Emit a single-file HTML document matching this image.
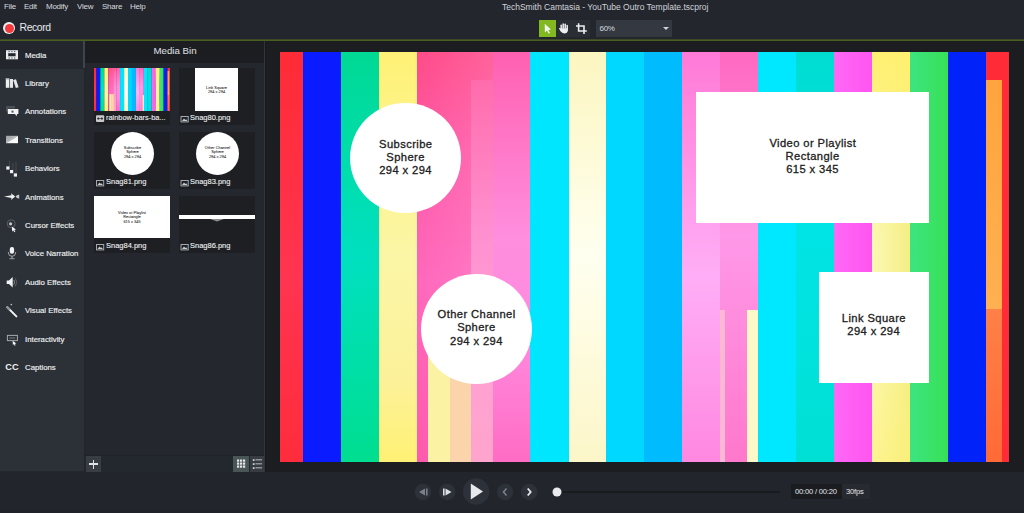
<!DOCTYPE html>
<html><head><meta charset="utf-8">
<style>
*{margin:0;padding:0;box-sizing:border-box}
html,body{width:1024px;height:513px;overflow:hidden;background:#23262d;font-family:"Liberation Sans",sans-serif;color:#d8dbe0}
.a{position:absolute}
.t{position:absolute;white-space:nowrap;line-height:1}
.ph{width:160px;text-align:center;font-size:11.2px;letter-spacing:0.4px;text-indent:0.4px;line-height:13.3px;color:#202020;-webkit-text-stroke:0.3px #202020}
</style></head><body>
<!-- top bar -->
<div class="a" style="left:0;top:0;width:1024px;height:40px;background:#23262d"></div>
<div class="t" style="left:4px;top:3px;font-size:8px;letter-spacing:-0.25px;color:#d8dade">File</div>
<div class="t" style="left:24px;top:3px;font-size:8px;letter-spacing:-0.25px;color:#d8dade">Edit</div>
<div class="t" style="left:46px;top:3px;font-size:8px;letter-spacing:-0.25px;color:#d8dade">Modify</div>
<div class="t" style="left:77px;top:3px;font-size:8px;letter-spacing:-0.25px;color:#d8dade">View</div>
<div class="t" style="left:102px;top:3px;font-size:8px;letter-spacing:-0.25px;color:#d8dade">Share</div>
<div class="t" style="left:130px;top:3px;font-size:8px;letter-spacing:-0.25px;color:#d8dade">Help</div>
<div class="t" style="left:502px;top:3px;font-size:8.5px;color:#d0d3d8">TechSmith Camtasia - YouTube Outro Template.tscproj</div>
<div class="a" style="left:3px;top:22px;width:12px;height:12px;border-radius:50%;background:#f0f0f0"></div>
<div class="a" style="left:4.5px;top:23.5px;width:9px;height:9px;border-radius:50%;background:#f23a3f"></div>
<div class="t" style="left:19.6px;top:23.3px;font-size:10.4px;letter-spacing:-0.4px;color:#e8eaee">Record</div>
<!-- toolbar -->
<div class="a" style="left:539px;top:20px;width:51px;height:17px;background:#292d34"></div>
<div class="a" style="left:539px;top:20px;width:17px;height:17px;background:#82b820"></div>
<svg class="a" style="left:536px;top:17px" width="56" height="23" viewBox="536 17 56 23">
  <path d="M544.7 23.8 L551 29.6 L548.4 29.9 L550 33 L548.6 33.6 L547 30.5 L544.9 32.4 Z" fill="#f4f6f0"/>
  <g stroke="#eceef0" stroke-linecap="round" fill="none"><path d="M561.2 29 V25.2" stroke-width="1.5"/><path d="M563.2 28 V23.9" stroke-width="1.5"/><path d="M565.2 28 V24.2" stroke-width="1.5"/><path d="M567.2 29 V25.6" stroke-width="1.5"/><path d="M559.8 28.6 L561.4 31" stroke-width="1.5"/></g><path d="M560.5 28.2 H567.9 V30.5 Q567.5 33.4 564.2 33.4 Q561.8 33.4 560.6 31 Z" fill="#eceef0"/>
  <path d="M578.6 23.3 V31 H586.8 M576 26 H584 V34" fill="none" stroke="#eceef0" stroke-width="1.6"/>
</svg>
<div class="a" style="left:596px;top:20px;width:76px;height:17px;background:#333841"></div>
<div class="t" style="left:599.6px;top:25px;font-size:8px;letter-spacing:-0.4px;color:#d8dade">60%</div>
<div class="a" style="left:663px;top:27px;width:0;height:0;border-left:3px solid transparent;border-right:3px solid transparent;border-top:3px solid #d0d3d8"></div>
<!-- green line -->
<div class="a" style="left:0;top:39px;width:1024px;height:1px;background:#3a4826"></div><div class="a" style="left:0;top:40px;width:1024px;height:1px;background:#4a5e22"></div>

<!-- sidebar -->
<div class="a" style="left:0;top:41px;width:84px;height:430px;background:#2c3137"></div>
<div class="a" style="left:0;top:41px;width:84px;height:28px;background:#23272d"></div>
<div class="a" style="left:84px;top:41px;width:1px;height:430px;background:#22262b"></div><div class="a" style="left:83px;top:41px;width:2px;height:27px;background:#3e444b"></div>

<div class="t" style="left:25px;top:51.5px;font-size:7.8px;color:#eef0f2;-webkit-text-stroke:0.15px #eef0f2">Media</div>
<div class="t" style="left:25px;top:79.9px;font-size:7.8px;color:#eef0f2;-webkit-text-stroke:0.15px #eef0f2">Library</div>
<div class="t" style="left:25px;top:108.3px;font-size:7.8px;color:#eef0f2;-webkit-text-stroke:0.15px #eef0f2">Annotations</div>
<div class="t" style="left:25px;top:136.7px;font-size:7.8px;color:#eef0f2;-webkit-text-stroke:0.15px #eef0f2">Transitions</div>
<div class="t" style="left:25px;top:165.1px;font-size:7.8px;color:#eef0f2;-webkit-text-stroke:0.15px #eef0f2">Behaviors</div>
<div class="t" style="left:25px;top:193.5px;font-size:7.8px;color:#eef0f2;-webkit-text-stroke:0.15px #eef0f2">Animations</div>
<div class="t" style="left:25px;top:221.9px;font-size:7.8px;color:#eef0f2;-webkit-text-stroke:0.15px #eef0f2">Cursor Effects</div>
<div class="t" style="left:25px;top:250.3px;font-size:7.8px;color:#eef0f2;-webkit-text-stroke:0.15px #eef0f2">Voice Narration</div>
<div class="t" style="left:25px;top:278.7px;font-size:7.8px;color:#eef0f2;-webkit-text-stroke:0.15px #eef0f2">Audio Effects</div>
<div class="t" style="left:25px;top:307.1px;font-size:7.8px;color:#eef0f2;-webkit-text-stroke:0.15px #eef0f2">Visual Effects</div>
<div class="t" style="left:25px;top:335.5px;font-size:7.8px;color:#eef0f2;-webkit-text-stroke:0.15px #eef0f2">Interactivity</div>
<div class="t" style="left:25px;top:363.9px;font-size:7.8px;color:#eef0f2;-webkit-text-stroke:0.15px #eef0f2">Captions</div>
<svg class="a" style="left:0;top:41px" width="24" height="340" viewBox="0 41 24 340">
  <!-- media -->
  <rect x="6" y="50.2" width="12" height="9.1" fill="#e8eaec"/>
  <rect x="8.2" y="53.2" width="7.4" height="3.1" fill="#23272d"/>
  <rect x="8.6" y="50.9" width="1" height="1.2" fill="#3a3e44"/><rect x="11.4" y="50.9" width="1" height="1.2" fill="#3a3e44"/><rect x="14.2" y="50.9" width="1" height="1.2" fill="#3a3e44"/>
  <rect x="8.6" y="57.4" width="1" height="1.2" fill="#3a3e44"/><rect x="11.4" y="57.4" width="1" height="1.2" fill="#3a3e44"/><rect x="14.2" y="57.4" width="1" height="1.2" fill="#3a3e44"/>
  <!-- library -->
  <rect x="5.8" y="78" width="3.4" height="9.8" fill="#eceef0"/>
  <rect x="9.8" y="79" width="3.2" height="8.8" fill="#e4e6e8"/>
  <path d="M13.2 80 L16 79.2 L18.6 87.2 L15.8 88 Z" fill="#e4e6e8"/><rect x="5.8" y="78" width="3.4" height="1.4" fill="#9a9ea4"/>
  <!-- annotations -->
  <path d="M6 106 H15 V108.5 H8 V111.5 H6 Z" fill="#4a5058"/>
  <path d="M7.8 109 H18.4 V114 H17 L16.6 116.2 L15 114 H7.8 Z" fill="#f2f3f5"/>
  <rect x="11.5" y="110.6" width="2" height="2" fill="#55585e"/>
  <!-- transitions -->
  <defs><linearGradient id="tg" x1="0" y1="0" x2="1" y2="1"><stop offset="0" stop-color="#9c9ea2"/><stop offset="0.5" stop-color="#b8babd"/><stop offset="0.55" stop-color="#f4f5f6"/><stop offset="1" stop-color="#ffffff"/></linearGradient></defs>
  <rect x="6" y="135.8" width="12" height="7.4" fill="url(#tg)"/>
  <!-- behaviors -->
  <rect x="9" y="161" width="0.8" height="6" fill="#4c5058"/><rect x="12.5" y="163" width="0.8" height="7" fill="#4c5058"/><rect x="15.6" y="162" width="0.8" height="11" fill="#4c5058"/>
  <rect x="6.3" y="166.4" width="3.2" height="3.2" fill="#f0f1f3"/>
  <rect x="10" y="170" width="3.2" height="3.2" fill="#f0f1f3"/>
  <rect x="13.8" y="173.4" width="3.2" height="3.2" fill="#f0f1f3"/>
  <!-- animations -->
  <path d="M4 196.6 L11.5 195.2 L11 193.3 L15.2 196.6 L11 199.9 L11.5 198 Z" fill="#f0f1f3"/>
  <path d="M15.6 196.6 Q17 194.4 19.2 194.8 V198.4 Q17 198.8 15.6 196.6 Z" fill="#c8cacd"/>
  <!-- cursor effects -->
  <circle cx="11.2" cy="223.8" r="4" fill="none" stroke="#5a5e66" stroke-width="1"/>
  <circle cx="10.6" cy="223.8" r="1.6" fill="#c4c8d2"/>
  <path d="M11.8 226.6 L16 229.6 L14.3 229.9 L15.4 231.8 L14.4 232.3 L13.3 230.4 L12.2 231.4 Z" fill="#f2f3f5"/>
  <!-- voice narration -->
  <rect x="9.8" y="247" width="4.3" height="6.8" rx="2" fill="#f2f3f5"/>
  <path d="M8.3 252 Q8.5 256 12 256.2 Q15.5 256 15.7 252" fill="none" stroke="#9a9ea4" stroke-width="1.1"/>
  <rect x="11.4" y="256" width="1.2" height="2.6" fill="#9a9ea4"/>
  <rect x="9.5" y="258.2" width="5" height="1" fill="#9a9ea4"/>
  <!-- audio effects -->
  <path d="M6.7 280.5 H9 L12.7 277 V287.6 L9 284 H6.7 Z" fill="#f2f3f5"/>
  <path d="M13.8 280 Q15.3 282.3 13.8 284.6" fill="none" stroke="#8a8e96" stroke-width="1"/>
  <path d="M15.3 278.3 Q18.2 282.3 15.3 286.3" fill="none" stroke="#5a5e66" stroke-width="1"/>
  <!-- visual effects -->
  <path d="M7.3 307.3 L16.4 316.4" stroke="#f0f1f3" stroke-width="2" stroke-linecap="round"/>
  <path d="M7.3 307.3 L9.2 309.2" stroke="#8a8e96" stroke-width="2.1" stroke-linecap="round"/>
  <circle cx="11.3" cy="304.6" r="0.8" fill="#c8cacd"/>
  <!-- interactivity -->
  <rect x="7.4" y="335.4" width="10" height="5.2" fill="none" stroke="#a4a8ae" stroke-width="1"/>
  <rect x="9.2" y="337.6" width="6" height="0.8" fill="#8a8e96"/>
  <path d="M12.6 340.8 L16.4 343.4 L14.9 343.7 L15.6 345.3 L14.6 345.7 L14 344.1 L12.9 345 Z" fill="#f4f5f6"/>
</svg>
<div class="t" style="left:5.2px;top:363.2px;font-size:9.2px;font-weight:bold;color:#eceef0;letter-spacing:0.2px">CC</div>
<!-- media bin -->
<div class="a" style="left:85px;top:41px;width:180px;height:431px;background:#24282e"></div>
<div class="a" style="left:85px;top:41px;width:180px;height:21.5px;background:#1b1d21"></div>
<div class="t" style="left:85px;width:180px;text-align:center;top:45.8px;font-size:9.7px;color:#d4d7dc;-webkit-text-stroke:0.12px #d4d7dc">Media Bin</div>
<!-- tiles -->
<div class="a" style="left:94px;top:68px;width:76px;height:57px;background:#1d1f23"></div>
<div class="a" style="left:179px;top:68px;width:76px;height:57px;background:#1d1f23"></div>
<div class="a" style="left:94px;top:132px;width:76px;height:57px;background:#1d1f23"></div>
<div class="a" style="left:179px;top:132px;width:76px;height:57px;background:#1d1f23"></div>
<div class="a" style="left:94px;top:196px;width:76px;height:57px;background:#1d1f23"></div>
<div class="a" style="left:179px;top:196px;width:76px;height:57px;background:#1d1f23"></div>
<!-- thumb 1 rainbow -->
<div class="a" style="left:94px;top:68px;width:76px;height:43px;overflow:hidden"><div class="a" style="left:0;top:0;width:729px;height:411px;transform-origin:0 0;transform:scale(0.10425,0.10462)"><div class="a" style="left:0px;top:0;width:23px;height:411px;background:linear-gradient(#ff2b36,#ff3450 55%,#ff2c3c)"></div>
<div class="a" style="left:23px;top:0;width:38px;height:411px;background:#0a1cff"></div>
<div class="a" style="left:61px;top:0;width:38px;height:411px;background:linear-gradient(#00d994,#00e0c0 50%,#00de90)"></div>
<div class="a" style="left:99px;top:0;width:38px;height:411px;background:linear-gradient(#fff176,#fbf6a6 50%,#fcf19a 80%,#fff174)"></div>
<div class="a" style="left:137px;top:0;width:76px;height:411px;background:linear-gradient(90deg,rgba(255,255,255,0),rgba(255,255,255,0.12)),linear-gradient(170deg,#ff4a88 0%,#ff5aa8 25%,#ff68bc 55%,#ff58ac 100%)"></div>
<div class="a" style="left:213px;top:0;width:37px;height:411px;background:linear-gradient(#ff60b0,#ff8ede 45%,#ff8ade 70%,#ff6cc4)"></div>
<div class="a" style="left:250px;top:0;width:38.5px;height:411px;background:#00e6ff"></div>
<div class="a" style="left:288.5px;top:0;width:37.5px;height:411px;background:linear-gradient(#fcf6c0,#fffff0 50%,#fcf6c8)"></div>
<div class="a" style="left:326px;top:0;width:38px;height:411px;background:#00d8ff"></div>
<div class="a" style="left:364px;top:0;width:38px;height:411px;background:#00bcff"></div>
<div class="a" style="left:402px;top:0;width:38px;height:411px;background:linear-gradient(#ff7ad6,#ffaef6 55%,#ff88e0)"></div>
<div class="a" style="left:440px;top:0;width:38px;height:411px;background:linear-gradient(#ff68c0,#ff98e8 45%,#ff78cc)"></div>
<div class="a" style="left:478px;top:0;width:38px;height:411px;background:#00e8ff"></div>
<div class="a" style="left:516px;top:0;width:38px;height:411px;background:linear-gradient(#00dcd0,#00e4e6 40%,#00e2dc 75%,#00dfd4)"></div>
<div class="a" style="left:554px;top:0;width:38px;height:411px;background:linear-gradient(90deg,#ff68f6,#ff55f0)"></div>
<div class="a" style="left:592px;top:0;width:38px;height:411px;background:linear-gradient(#fff070,rgba(255,240,112,0) 45%),linear-gradient(rgba(255,255,255,0) 70%,rgba(255,240,112,0.5)),linear-gradient(90deg,#fdf8b4,#f4ee84)"></div>
<div class="a" style="left:630px;top:0;width:38px;height:411px;background:linear-gradient(90deg,#3ce480,#38e056)"></div>
<div class="a" style="left:668px;top:0;width:38px;height:411px;background:#0222fa"></div>
<div class="a" style="left:706px;top:0;width:23px;height:411px;background:#ff2b36"></div>
<div class="a" style="left:191px;top:29px;width:22px;height:382px;background:linear-gradient(#ff6cac,#ff90d0 40%,#ffa0d4 70%,#ffa4cc)"></div>
<div class="a" style="left:148px;top:250px;width:22px;height:161px;background:#fcf2a4"></div>
<div class="a" style="left:170px;top:250px;width:21px;height:161px;background:#fcd4ac"></div>
<div class="a" style="left:440px;top:259px;width:5px;height:152px;background:#ffb8d4"></div>
<div class="a" style="left:467px;top:259px;width:11px;height:152px;background:#fdf8c8"></div>
<div class="a" style="left:706px;top:29px;width:16px;height:229px;background:linear-gradient(#ffa43e,#ffb050)"></div>
<div class="a" style="left:706px;top:258px;width:16px;height:153px;background:linear-gradient(#ff8048,#ff6a36)"></div></div></div>
<!-- thumb 2 link square -->
<div class="a" style="left:195px;top:68px;width:43px;height:43px;background:#fff"></div>
<div class="t" style="left:195px;width:43px;text-align:center;top:86px;font-size:3.9px;line-height:4.4px;color:#1a1a1a;-webkit-text-stroke:0.05px #1a1a1a">Link Square<br>294 x 294</div>
<!-- thumb 3 subscribe circle -->
<div class="a" style="left:111px;top:132px;width:43px;height:43px;border-radius:50%;background:#fff"></div>
<div class="t" style="left:111px;width:43px;text-align:center;top:146px;font-size:3.9px;line-height:4.4px;color:#1a1a1a;-webkit-text-stroke:0.05px #1a1a1a">Subscribe<br>Sphere<br>294 x 294</div>
<!-- thumb 4 other channel -->
<div class="a" style="left:196px;top:132px;width:43px;height:43px;border-radius:50%;background:#fff"></div>
<div class="t" style="left:196px;width:43px;text-align:center;top:146px;font-size:3.9px;line-height:4.4px;color:#1a1a1a;-webkit-text-stroke:0.05px #1a1a1a">Other Channel<br>Sphere<br>294 x 294</div>
<!-- thumb 5 rectangle -->
<div class="a" style="left:94px;top:196px;width:76px;height:42px;background:#fff"></div>
<div class="t" style="left:94px;width:76px;text-align:center;top:211px;font-size:3.9px;line-height:4.4px;color:#1a1a1a;-webkit-text-stroke:0.05px #1a1a1a">Video or Playlist<br>Rectangle<br>615 x 345</div>
<!-- thumb 6 strip -->
<div class="a" style="left:179px;top:215px;width:76px;height:4px;background:#fff"></div><svg class="a" style="left:210px;top:219px" width="14" height="3" viewBox="0 0 14 3"><path d="M0 0 H14 L7 2.5 Z" fill="#8a8c90"/></svg>
<!-- labels -->
<div class="t" style="left:106px;top:114px;font-size:7.4px;color:#eceef0;-webkit-text-stroke:0.12px #eceef0">rainbow-bars-ba...</div>
<div class="t" style="left:190px;top:114px;font-size:7.5px;color:#eceef0;-webkit-text-stroke:0.12px #eceef0">Snag80.png</div>
<div class="t" style="left:106px;top:178px;font-size:7.5px;color:#eceef0;-webkit-text-stroke:0.12px #eceef0">Snag81.png</div>
<div class="t" style="left:190px;top:178px;font-size:7.5px;color:#eceef0;-webkit-text-stroke:0.12px #eceef0">Snag83.png</div>
<div class="t" style="left:106px;top:242px;font-size:7.5px;color:#eceef0;-webkit-text-stroke:0.12px #eceef0">Snag84.png</div>
<div class="t" style="left:190px;top:242px;font-size:7.5px;color:#eceef0;-webkit-text-stroke:0.12px #eceef0">Snag86.png</div>
<!-- label icons -->
<svg class="a" style="left:85px;top:100px" width="180" height="160" viewBox="85 100 180 160">
<rect x="96" y="115.2" width="8.2" height="6.8" rx="1" fill="#c8cacc"/><circle cx="98.3" cy="118.6" r="1.1" fill="#2a2c30"/><circle cx="101.9" cy="118.6" r="1.1" fill="#2a2c30"/><rect x="98.3" y="118.3" width="3.6" height="0.6" fill="#2a2c30"/>
<rect x="181.0" y="116.5" width="7.2" height="5.4" fill="none" stroke="#a4a8ac" stroke-width="1"/><path d="M182.0 121 L184.0 118.5 L185.5 120 L186.3 119.3 L187.3 121 Z" fill="#c8ccd0"/>
<rect x="96.5" y="180.5" width="7.2" height="5.4" fill="none" stroke="#a4a8ac" stroke-width="1"/><path d="M97.5 185 L99.5 182.5 L101 184 L101.8 183.3 L102.8 185 Z" fill="#c8ccd0"/>
<rect x="181.0" y="180.5" width="7.2" height="5.4" fill="none" stroke="#a4a8ac" stroke-width="1"/><path d="M182.0 185 L184.0 182.5 L185.5 184 L186.3 183.3 L187.3 185 Z" fill="#c8ccd0"/>
<rect x="96.5" y="244.5" width="7.2" height="5.4" fill="none" stroke="#a4a8ac" stroke-width="1"/><path d="M97.5 249 L99.5 246.5 L101 248 L101.8 247.3 L102.8 249 Z" fill="#c8ccd0"/>
<rect x="181.0" y="244.5" width="7.2" height="5.4" fill="none" stroke="#a4a8ac" stroke-width="1"/><path d="M182.0 249 L184.0 246.5 L185.5 248 L186.3 247.3 L187.3 249 Z" fill="#c8ccd0"/>
</svg>
<!-- bin bottom -->
<div class="a" style="left:85px;top:455px;width:180px;height:1px;background:#1f2328"></div><div class="a" style="left:85px;top:456px;width:180px;height:16px;background:#23282e"></div>
<div class="a" style="left:86px;top:456px;width:15px;height:16px;background:#383d44"></div>
<div class="a" style="left:89px;top:463.4px;width:9px;height:1.2px;background:#e0e2e6"></div>
<div class="a" style="left:92.9px;top:459.5px;width:1.2px;height:9px;background:#e0e2e6"></div>
<div class="a" style="left:250px;top:456px;width:15px;height:16px;background:#363c42"></div><div class="a" style="left:233px;top:456px;width:16px;height:16px;background:#4a5557"></div>
<svg class="a" style="left:233px;top:456px" width="32" height="15" viewBox="233 456 32 15">
<g fill="#e4e8e8"><rect x="237" y="459.5" width="2.2" height="2.2"/><rect x="240" y="459.5" width="2.2" height="2.2"/><rect x="243" y="459.5" width="2.2" height="2.2"/>
<rect x="237" y="462.5" width="2.2" height="2.2"/><rect x="240" y="462.5" width="2.2" height="2.2"/><rect x="243" y="462.5" width="2.2" height="2.2"/>
<rect x="237" y="465.5" width="2.2" height="2.2"/><rect x="240" y="465.5" width="2.2" height="2.2"/><rect x="243" y="465.5" width="2.2" height="2.2"/></g>
<g fill="#c8ccd0"><rect x="252.8" y="459.2" width="1.8" height="1.8"/><rect x="252.8" y="463.2" width="1.8" height="1.8"/><rect x="252.8" y="467.2" width="1.8" height="1.8"/>
<rect x="255.5" y="459.4" width="6.5" height="0.9"/><rect x="255.5" y="463.4" width="6.5" height="0.9"/><rect x="255.5" y="467.4" width="6.5" height="0.9"/></g>
</svg>

<!-- canvas area -->
<div class="a" style="left:264px;top:41px;width:760px;height:431px;background:#1c1d21"></div>
<div class="a" style="left:264px;top:41px;width:1px;height:431px;background:#32363c"></div><div class="a" style="left:265px;top:41px;width:1px;height:431px;background:#18191d"></div>

<!-- bottom bar -->
<div class="a" style="left:0;top:472px;width:1024px;height:41px;background:#22262c"></div><div class="a" style="left:0;top:510px;width:1024px;height:3px;background:#1f2228"></div>
<svg class="a" style="left:0;top:472px" width="1024" height="41" viewBox="0 472 1024 41">
  <circle cx="423" cy="492" r="8.2" fill="#2d3139"/>
  <path d="M419 492 L425 488.5 V495.5 Z" fill="#7c8087"/><rect x="426" y="488.5" width="1.6" height="7" fill="#7c8087"/>
  <circle cx="447.2" cy="492" r="8.2" fill="#2d3139"/>
  <rect x="443" y="488.5" width="1.6" height="7" fill="#dde0e4"/><path d="M445.5 488.5 L451.5 492 L445.5 495.5 Z" fill="#dde0e4"/>
  <circle cx="476.1" cy="491.5" r="13.2" fill="#2d3139"/>
  <path d="M470.8 483.5 L483 491.5 L470.8 499.5 Z" fill="#e6e8eb"/>
  <circle cx="505" cy="492" r="8.2" fill="#2d3139"/>
  <path d="M506.5 488.5 L503.5 492 L506.5 495.5" fill="none" stroke="#7c8087" stroke-width="1.6"/>
  <circle cx="529.2" cy="492" r="8.2" fill="#2d3139"/>
  <path d="M527.7 488.5 L530.7 492 L527.7 495.5" fill="none" stroke="#e6e8eb" stroke-width="1.8"/>
  <rect x="557" y="491.3" width="223" height="1.4" fill="#16181b"/>
  <circle cx="557" cy="492" r="4.5" fill="#e8eaed"/>
  <rect x="791" y="484" width="51" height="15" fill="#1a1c20"/>
  <rect x="842" y="484" width="28" height="15" fill="#272a31"/>
</svg>
<div class="t" style="left:795px;top:487.6px;font-size:7.6px;letter-spacing:-0.2px;color:#e4e6ea">00:00 / 00:20</div>
<div class="t" style="left:846px;top:487.6px;font-size:7.6px;letter-spacing:-0.2px;color:#e4e6ea">30fps</div>

<!-- canvas -->
<div id="cv" class="a" style="left:280px;top:52px;width:729px;height:410px;overflow:hidden;background:#fff"><div class="a" style="left:0;top:-1px;width:729px;height:411px">
<div class="a" style="left:0px;top:0;width:23px;height:411px;background:linear-gradient(#ff2b36,#ff3450 55%,#ff2c3c)"></div>
<div class="a" style="left:23px;top:0;width:38px;height:411px;background:#0a1cff"></div>
<div class="a" style="left:61px;top:0;width:38px;height:411px;background:linear-gradient(#00d994,#00e0c0 50%,#00de90)"></div>
<div class="a" style="left:99px;top:0;width:38px;height:411px;background:linear-gradient(#fff176,#fbf6a6 50%,#fcf19a 80%,#fff174)"></div>
<div class="a" style="left:137px;top:0;width:76px;height:411px;background:linear-gradient(90deg,rgba(255,255,255,0),rgba(255,255,255,0.12)),linear-gradient(170deg,#ff4a88 0%,#ff5aa8 25%,#ff68bc 55%,#ff58ac 100%)"></div>
<div class="a" style="left:213px;top:0;width:37px;height:411px;background:linear-gradient(#ff60b0,#ff8ede 45%,#ff8ade 70%,#ff6cc4)"></div>
<div class="a" style="left:250px;top:0;width:38.5px;height:411px;background:#00e6ff"></div>
<div class="a" style="left:288.5px;top:0;width:37.5px;height:411px;background:linear-gradient(#fcf6c0,#fffff0 50%,#fcf6c8)"></div>
<div class="a" style="left:326px;top:0;width:38px;height:411px;background:#00d8ff"></div>
<div class="a" style="left:364px;top:0;width:38px;height:411px;background:#00bcff"></div>
<div class="a" style="left:402px;top:0;width:38px;height:411px;background:linear-gradient(#ff7ad6,#ffaef6 55%,#ff88e0)"></div>
<div class="a" style="left:440px;top:0;width:38px;height:411px;background:linear-gradient(#ff68c0,#ff98e8 45%,#ff78cc)"></div>
<div class="a" style="left:478px;top:0;width:38px;height:411px;background:#00e8ff"></div>
<div class="a" style="left:516px;top:0;width:38px;height:411px;background:linear-gradient(#00dcd0,#00e4e6 40%,#00e2dc 75%,#00dfd4)"></div>
<div class="a" style="left:554px;top:0;width:38px;height:411px;background:linear-gradient(90deg,#ff68f6,#ff55f0)"></div>
<div class="a" style="left:592px;top:0;width:38px;height:411px;background:linear-gradient(#fff070,rgba(255,240,112,0) 45%),linear-gradient(rgba(255,255,255,0) 70%,rgba(255,240,112,0.5)),linear-gradient(90deg,#fdf8b4,#f4ee84)"></div>
<div class="a" style="left:630px;top:0;width:38px;height:411px;background:linear-gradient(90deg,#3ce480,#38e056)"></div>
<div class="a" style="left:668px;top:0;width:38px;height:411px;background:#0222fa"></div>
<div class="a" style="left:706px;top:0;width:23px;height:411px;background:#ff2b36"></div>
<div class="a" style="left:191px;top:29px;width:22px;height:382px;background:linear-gradient(#ff6cac,#ff90d0 40%,#ffa0d4 70%,#ffa4cc)"></div>
<div class="a" style="left:148px;top:250px;width:22px;height:161px;background:#fcf2a4"></div>
<div class="a" style="left:170px;top:250px;width:21px;height:161px;background:#fcd4ac"></div>
<div class="a" style="left:440px;top:259px;width:5px;height:152px;background:#ffb8d4"></div>
<div class="a" style="left:467px;top:259px;width:11px;height:152px;background:#fdf8c8"></div>
<div class="a" style="left:706px;top:29px;width:16px;height:229px;background:linear-gradient(#ffa43e,#ffb050)"></div>
<div class="a" style="left:706px;top:258px;width:16px;height:153px;background:linear-gradient(#ff8048,#ff6a36)"></div>

  <div class="a" style="left:70.2px;top:51.5px;width:110.6px;height:110.6px;border-radius:50%;background:#fff"></div>
  <div class="a" style="left:141px;top:222.6px;width:110.8px;height:110.8px;border-radius:50%;background:#fff"></div>
  <div class="a" style="left:416px;top:41px;width:233px;height:131px;background:#fff"></div>
  <div class="a" style="left:538.7px;top:221px;width:110.4px;height:110.8px;background:#fff"></div>
  <div class="t ph" style="left:45.6px;top:86.7px">Subscribe<br>Sphere<br>294 x 294</div>
  <div class="t ph" style="left:116.4px;top:257px">Other Channel<br>Sphere<br>294 x 294</div>
  <div class="t ph" style="left:452.6px;top:85.6px">Video or Playlist<br>Rectangle<br>615 x 345</div>
  <div class="t ph" style="left:513.7px;top:261px">Link Square<br>294 x 294</div>

</div></div>
</body></html>
